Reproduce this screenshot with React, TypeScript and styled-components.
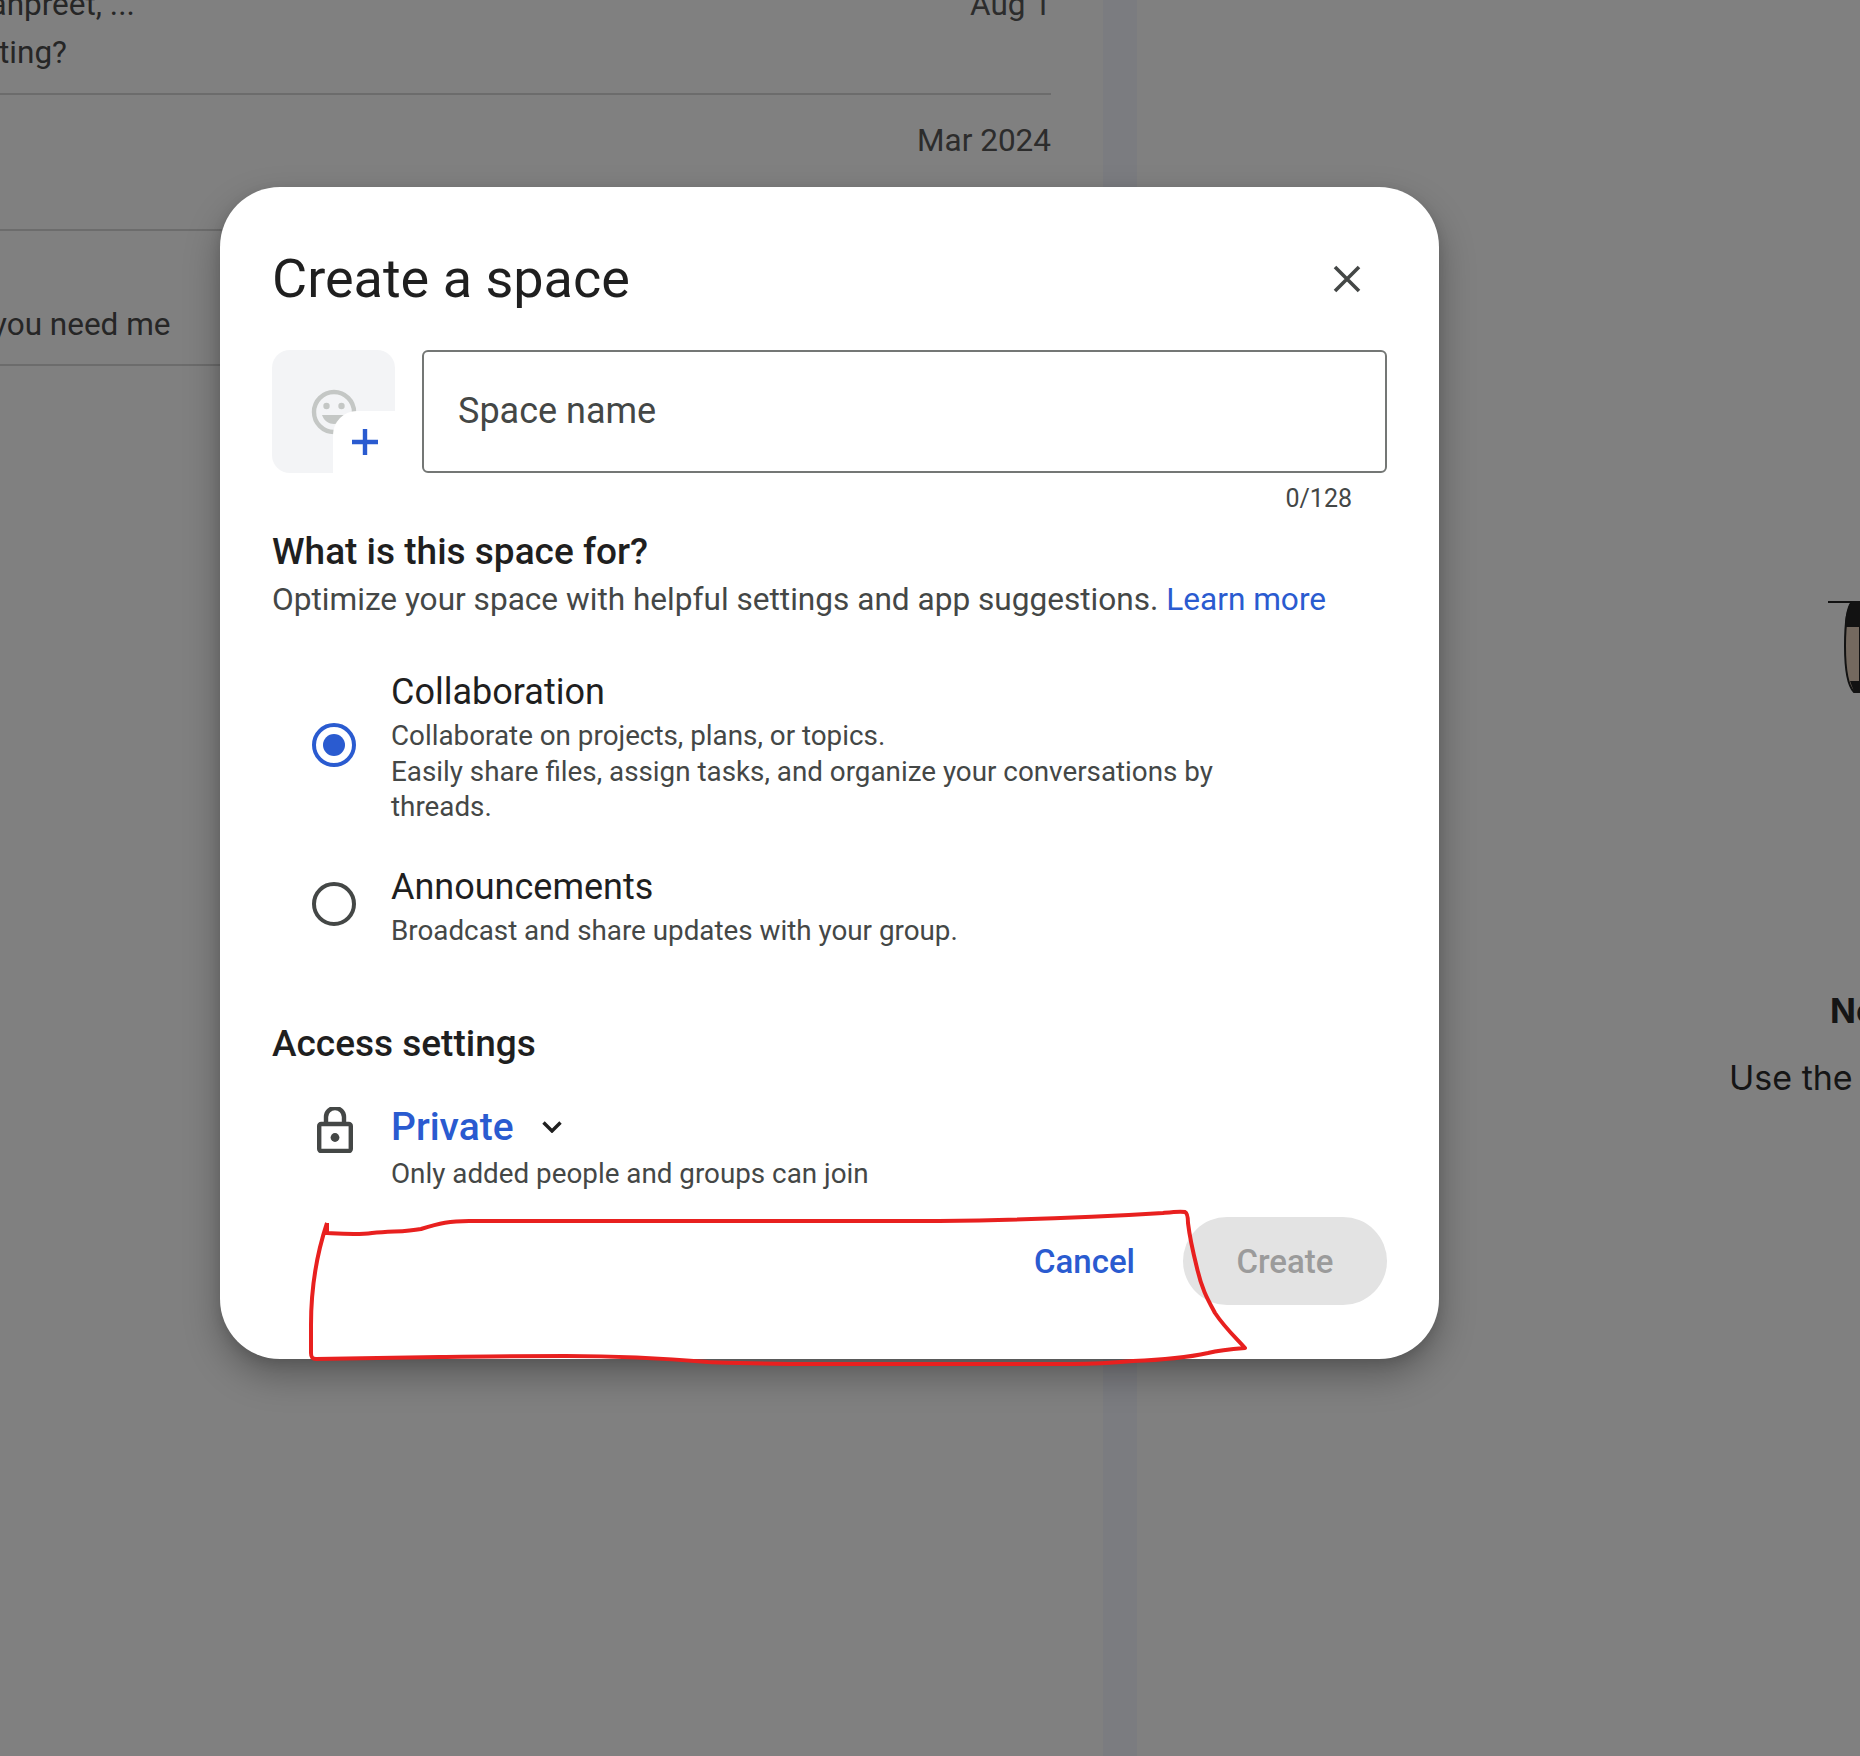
import { createGlobalStyle } from "styled-components";
import styled from "styled-components";

const GlobalStyle = createGlobalStyle`
  * { box-sizing: border-box; }
  html, body { margin: 0; padding: 0; background: #808080; overflow: hidden; }
  body { font-family: Roboto, "Liberation Sans", sans-serif; }
`;

const annotationPath =
  "M327 1223 L327 1233 C345 1234 358 1235 372 1233 C395 1231 405 1232 421 1229 C440 1223 450 1221 469 1221 L939 1221 C1020 1220 1100 1217 1163 1213 C1172 1212 1180 1211 1185 1212 C1187 1213 1188 1216 1188 1223 C1190 1240 1193 1252 1197 1268 C1202 1290 1208 1300 1215 1313 C1225 1328 1236 1338 1245 1348 C1232 1349 1220 1350 1208 1353 C1185 1358 1160 1360 1133 1361 C1100 1364 1080 1364 1073 1364 L812 1364 C770 1364 740 1363 708 1362 C660 1358 610 1356 566 1356 C520 1356 480 1356 439 1357 L316 1359 C312 1359 311 1357 311 1353 L311 1325 C311 1285 318 1250 327 1223";

const App = () => {
  return (
    <>
      <GlobalStyle />
      <Page>
        <ListColumn>
          <ListRow $height={95}>
            <RowTop>
              <ClippedText $shift={-38}>Manpreet, ...</ClippedText>
              <RowDate>Aug 1</RowDate>
            </RowTop>
            <ClippedText $shift={-62}>meeting?</ClippedText>
          </ListRow>
          <ListRow $height={136}>
            <RowTop $top={23}>
              <span />
              <RowDate>Mar 2024</RowDate>
            </RowTop>
          </ListRow>
          <ListRow $height={135}>
            <LastLine>
              <ClippedText $shift={-8}>you need me</ClippedText>
            </LastLine>
          </ListRow>
        </ListColumn>
        <Gutter />
        <DetailPane>
          <Illustration viewBox="0 0 32 92" width="32" height="92">
            <path d="M0 1h32" stroke="#121212" strokeWidth="2" />
            <path d="M32 1h-8c-4 4-7 20-7 44s3 40 9 46h6z" fill="#74695f" stroke="#121212" strokeWidth="2" />
            <path d="M17 26c0-12 3-21 7-25h8v25z" fill="#121212" />
            <path d="M22 80h10v11h-6z" fill="#121212" />
          </Illustration>
          <EmptyTitle>No</EmptyTitle>
          <EmptyText>Use the</EmptyText>
        </DetailPane>

        <Modal>
          <ModalHeader>
            <ModalTitle>Create a space</ModalTitle>
            <CloseButton aria-label="Close">
              <svg viewBox="0 0 28 28" width="28" height="28">
                <path d="M2 2l24 24M26 2L2 26" stroke="#444746" strokeWidth="3.6" fill="none" />
              </svg>
            </CloseButton>
          </ModalHeader>

          <NameRow>
            <EmojiTile>
              <svg viewBox="0 0 52 52" width="52" height="52">
                <circle cx="26" cy="26" r="20" fill="none" stroke="#c4c7c5" strokeWidth="4.4" />
                <circle cx="18.5" cy="20" r="3.2" fill="#c4c7c5" />
                <circle cx="33.5" cy="20" r="3.2" fill="#c4c7c5" />
                <path d="M14 29h24c-2 6-7 9-12 9s-10-3-12-9z" fill="#c4c7c5" />
              </svg>
              <EmojiBadge>
                <svg viewBox="0 0 26 26" width="26" height="26">
                  <path d="M13 0v26M0 13h26" stroke="#2a5bd0" strokeWidth="4.4" fill="none" />
                </svg>
              </EmojiBadge>
            </EmojiTile>
            <NameInput>Space name</NameInput>
          </NameRow>
          <Counter>0/128</Counter>

          <SectionHeading $top={17}>What is this space for?</SectionHeading>
          <SectionText>
            Optimize your space with helpful settings and app suggestions. <LearnMore>Learn more</LearnMore>
          </SectionText>

          <OptionRow $top={51}>
            <Radio $checked />
            <OptionBody>
              <OptionTitle>Collaboration</OptionTitle>
              <OptionText>
                Collaborate on projects, plans, or topics.
                <br />
                Easily share files, assign tasks, and organize your conversations by threads.
              </OptionText>
            </OptionBody>
          </OptionRow>
          <OptionRow $top={42}>
            <Radio />
            <OptionBody>
              <OptionTitle>Announcements</OptionTitle>
              <OptionText>Broadcast and share updates with your group.</OptionText>
            </OptionBody>
          </OptionRow>

          <SectionHeading $top={75}>Access settings</SectionHeading>
          <AccessRow>
            <LockSlot>
              <svg viewBox="0 0 36 46" width="36" height="46">
                <path d="M9 17V10a9 9 0 0 1 18 0v7" fill="none" stroke="#444746" strokeWidth="4.4" />
                <rect x="2.2" y="17" width="31.6" height="27" rx="2" fill="none" stroke="#444746" strokeWidth="4.4" />
                <circle cx="18" cy="30.5" r="4.4" fill="#444746" />
              </svg>
            </LockSlot>
            <OptionBody>
              <AccessPicker>
                <AccessName>Private</AccessName>
                <svg viewBox="0 0 20 12" width="20" height="12">
                  <path d="M1.5 1.5L10 10l8.5-8.5" fill="none" stroke="#1f1f1f" strokeWidth="3.4" />
                </svg>
              </AccessPicker>
              <AccessText>Only added people and groups can join</AccessText>
            </OptionBody>
          </AccessRow>

          <Footer>
            <CancelButton>Cancel</CancelButton>
            <CreateButton>Create</CreateButton>
          </Footer>
        </Modal>

        <Annotation viewBox="0 0 1860 1756" width="1860" height="1756">
          <path d={annotationPath} fill="none" stroke="#e8201f" strokeWidth="4" strokeLinejoin="round" />
        </Annotation>
      </Page>
    </>
  );
};

export default App;

const Page = styled.div`
  position: relative;
  display: flex;
  width: 1860px;
  height: 1756px;
  overflow: hidden;
  background: #808080;
`;

const ListColumn = styled.div`
  width: 1103px;
  flex: none;
  padding-right: 52px;
  overflow: hidden;
  font-size: 31.5px;
  color: #262626;
`;

const ListRow = styled.div<{ $height: number }>`
  height: ${(p) => p.$height}px;
  border-bottom: 2px solid #6c6c6c;
  overflow: hidden;
`;

const RowTop = styled.div<{ $top?: number }>`
  display: flex;
  justify-content: space-between;
  height: 48px;
  margin-top: ${(p) => p.$top ?? -18}px;
  line-height: 46px;
`;

const RowDate = styled.span`
  color: #2c2c2c;
`;

const LastLine = styled.div`
  margin-top: 71px;
  line-height: 46px;
`;

const ClippedText = styled.div<{ $shift: number }>`
  margin-left: ${(p) => p.$shift}px;
  line-height: 46px;
  white-space: nowrap;
`;

const Gutter = styled.div`
  width: 34px;
  flex: none;
  background: #7b7c80;
`;

const DetailPane = styled.div`
  flex: 1;
  display: flex;
  flex-direction: column;
  align-items: flex-start;
  padding-top: 601px;
  color: #151515;
  font-family: Inter, sans-serif;
  white-space: nowrap;
`;

const Illustration = styled.svg`
  display: block;
  margin-left: 691px;
`;

const EmptyTitle = styled.div`
  margin-top: 298px;
  margin-left: 693px;
  font-size: 34px;
  font-weight: 700;
  line-height: 40px;
`;

const EmptyText = styled.div`
  margin-top: 27px;
  margin-left: 592px;
  font-size: 34px;
  line-height: 40px;
`;

const Modal = styled.div`
  position: absolute;
  left: 220px;
  top: 187px;
  width: 1219px;
  height: 1172px;
  padding: 60px 52px 52px;
  display: flex;
  flex-direction: column;
  background: #fff;
  border-radius: 60px;
  box-shadow: 0 16px 36px rgba(0, 0, 0, 0.3), 0 4px 12px rgba(0, 0, 0, 0.1);
  color: #1f1f1f;
`;

const ModalHeader = styled.div`
  display: flex;
  align-items: center;
  justify-content: space-between;
  height: 64px;
  padding-right: 26px;
`;

const ModalTitle = styled.div`
  font-size: 54px;
  line-height: 64px;
`;

const CloseButton = styled.div`
  display: flex;
  width: 28px;
  height: 28px;
`;

const NameRow = styled.div`
  display: flex;
  gap: 27px;
  margin-top: 39px;
`;

const EmojiTile = styled.div`
  position: relative;
  display: flex;
  align-items: center;
  justify-content: center;
  width: 123px;
  height: 123px;
  flex: none;
  background: #f3f4f6;
  border-radius: 18px;
`;

const EmojiBadge = styled.div`
  position: absolute;
  right: 0;
  bottom: 0;
  display: flex;
  align-items: center;
  justify-content: center;
  width: 62px;
  height: 62px;
  padding-left: 2px;
  background: #fff;
  border-top-left-radius: 24px;
`;

const NameInput = styled.div`
  flex: 1;
  display: flex;
  align-items: center;
  height: 123px;
  padding: 0 0 2px 34px;
  border: 2px solid #747775;
  border-radius: 6px;
  font-size: 36px;
  color: #444746;
`;

const Counter = styled.div`
  margin-top: 11px;
  padding-right: 35px;
  font-size: 25px;
  line-height: 30px;
  text-align: right;
  color: #444746;
`;

const SectionHeading = styled.div<{ $top: number }>`
  margin-top: ${(p) => p.$top}px;
  font-size: 37px;
  font-weight: 500;
  line-height: 42px;
`;

const SectionText = styled.div`
  margin-top: 6px;
  font-size: 31.6px;
  line-height: 42px;
  color: #444746;
`;

const LearnMore = styled.span`
  color: #2a5bd0;
`;

const OptionRow = styled.div<{ $top: number }>`
  display: flex;
  align-items: center;
  margin-top: ${(p) => p.$top}px;
`;

const Radio = styled.div<{ $checked?: boolean }>`
  display: flex;
  align-items: center;
  justify-content: center;
  width: 44px;
  height: 44px;
  flex: none;
  margin: 0 35px 7px 40px;
  border: 4.5px solid ${(p) => (p.$checked ? "#2a5bd0" : "#444746")};
  border-radius: 50%;
  &::after {
    content: "";
    display: ${(p) => (p.$checked ? "block" : "none")};
    width: 22px;
    height: 22px;
    border-radius: 50%;
    background: #2a5bd0;
  }
`;

const OptionBody = styled.div`
  flex: 1;
`;

const OptionTitle = styled.div`
  font-size: 36px;
  line-height: 40px;
`;

const OptionText = styled.div`
  width: 860px;
  margin-top: 6px;
  font-size: 27.8px;
  line-height: 35.5px;
  color: #444746;
`;

const AccessRow = styled.div`
  display: flex;
  margin-top: 41px;
`;

const LockSlot = styled.div`
  display: flex;
  justify-content: center;
  width: 119px;
  padding-top: 1px;
  padding-left: 6px;
  flex: none;
`;

const AccessPicker = styled.div`
  display: flex;
  align-items: center;
  gap: 28px;
  height: 42px;
`;

const AccessName = styled.div`
  font-size: 39px;
  font-weight: 500;
  color: #2a5bd0;
`;

const AccessText = styled.div`
  margin-top: 8px;
  font-size: 27.8px;
  line-height: 36px;
  color: #444746;
`;

const Footer = styled.div`
  display: flex;
  align-items: center;
  justify-content: flex-end;
  gap: 48px;
  margin-top: 25px;
`;

const CancelButton = styled.div`
  font-size: 33px;
  font-weight: 500;
  color: #2a5bd0;
`;

const CreateButton = styled.div`
  display: flex;
  align-items: center;
  justify-content: center;
  width: 204px;
  height: 88px;
  background: #e3e3e3;
  border-radius: 44px;
  font-size: 33px;
  font-weight: 500;
  color: #9b9b9b;
`;

const Annotation = styled.svg`
  position: absolute;
  left: 0;
  top: 0;
  pointer-events: none;
`;
